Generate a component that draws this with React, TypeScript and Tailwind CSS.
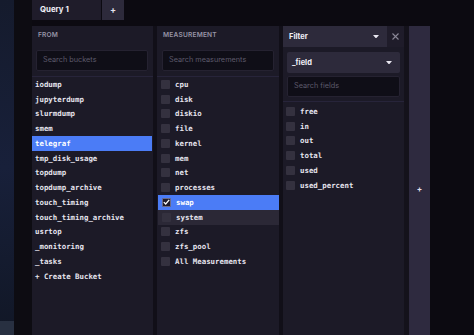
import { useState } from "react";

const buckets = [
  "iodump",
  "jupyterdump",
  "slurmdump",
  "smem",
  "telegraf",
  "tmp_disk_usage",
  "topdump",
  "topdump_archive",
  "touch_timing",
  "touch_timing_archive",
  "usrtop",
  "_monitoring",
  "_tasks",
  "+ Create Bucket",
];

const measurements = [
  "cpu",
  "disk",
  "diskio",
  "file",
  "kernel",
  "mem",
  "net",
  "processes",
  "swap",
  "system",
  "zfs",
  "zfs_pool",
  "All Measurements",
];

const fields = ["free", "in", "out", "total", "used", "used_percent"];

const mono = "font-['DejaVu_Sans_Mono',monospace]";
const sans = "font-['Inter',sans-serif]";

function Caret() {
  return (
    <svg width="6" height="3.5" viewBox="0 0 6 3.5" className="shrink-0">
      <path d="M0 0h6L3 3.5z" fill="#e8e6f0" />
    </svg>
  );
}

function Checkbox({ checked }: { checked?: boolean }) {
  if (checked) {
    return (
      <span className="w-[9px] h-[9px] rounded-[1px] bg-[#1f1c2c] border border-[#6b6a86] flex items-center justify-center shrink-0">
        <svg width="7" height="6" viewBox="0 0 7 6">
          <path
            d="M0.8 3.1 2.7 5 6.2 0.9"
            stroke="#fff"
            strokeWidth="1.3"
            fill="none"
          />
        </svg>
      </span>
    );
  }
  return <span className="w-[9px] h-[9px] rounded-[1px] bg-[#34313f] shrink-0" />;
}

function SearchBox({ placeholder }: { placeholder: string }) {
  return (
    <div
      className={`h-[21px] bg-[#0f0e17] border border-[#252231] rounded-[2px] flex items-center px-[6px] text-[7.3px] text-[#5d5a6b] ${sans}`}
    >
      {placeholder}
    </div>
  );
}

function PanelHeader({ title }: { title: string }) {
  return (
    <div
      className={`h-[20px] flex items-end pb-[5px] px-[6px] text-[6.6px] font-semibold tracking-[0.2px] text-[#9794a6] ${sans}`}
    >
      {title}
    </div>
  );
}

export default function App() {
  const [selectedBucket] = useState("telegraf");
  const [selectedMeasurement] = useState("swap");

  return (
    <div className="w-[474px] h-[335px] bg-[#0c0a11] flex overflow-hidden">
      <div className="w-[14px] h-full flex flex-col bg-gradient-to-b from-[#151b2d] via-[#18203a] to-[#111726]">
        <div className="flex-1" />
        <div className="h-[14px] bg-[#283041]" />
      </div>
      <div className="w-[18px] h-full bg-[#0d0c12]" />

      <div className="flex flex-col">
        {/* tabs */}
        <div className="h-[20px] flex gap-[1px]">
          <div
            className={`w-[69px] bg-[#1f1c2a] flex items-center px-[8px] text-[7.8px] font-bold text-[#f1eff8] ${sans}`}
          >
            Query 1
          </div>
          <div
            className={`w-[22px] bg-[#2d2a3b] flex items-center justify-center text-[9px] font-bold text-[#e4e2ee] ${sans}`}
          >
            +
          </div>
        </div>

        <div className="mt-[6px] flex flex-1">
          {/* FROM */}
          <div className="w-[121px] bg-[#1c1a27] flex flex-col">
            <PanelHeader title="FROM" />
            <div className="pl-[4px] pr-[5px] pt-[4px] pb-[5px] border-b border-[#27243a]">
              <SearchBox placeholder="Search buckets" />
            </div>
            <div className="flex flex-col">
              {buckets.map((b) => (
                <div
                  key={b}
                  className={`h-[14.75px] flex items-center px-[3px] text-[7.4px] font-bold ${mono} ${
                    b === selectedBucket
                      ? "bg-[#4b7cf6] text-white mr-[1px]"
                      : "text-[#e6e4ee]"
                  }`}
                >
                  {b}
                </div>
              ))}
            </div>
          </div>

          <div className="w-[4px] bg-[#110f18]" />

          {/* MEASUREMENT */}
          <div className="w-[122px] bg-[#1c1a27] flex flex-col">
            <PanelHeader title="MEASUREMENT" />
            <div className="px-[5px] pt-[4px] pb-[5px] border-b border-[#27243a]">
              <SearchBox placeholder="Search measurements" />
            </div>
            <div className="flex flex-col">
              {measurements.map((m) => (
                <div
                  key={m}
                  className={`h-[14.75px] flex items-center gap-[5px] pl-[4px] text-[7.4px] font-bold ${mono} ${
                    m === selectedMeasurement
                      ? "bg-[#4b7cf6] text-white ml-[1px] pl-[3px]"
                      : m === "system"
                        ? "bg-[#2b2836] text-[#e6e4ee] ml-[1px] pl-[3px]"
                        : "text-[#e6e4ee]"
                  }`}
                >
                  <Checkbox checked={m === selectedMeasurement} />
                  {m}
                </div>
              ))}
            </div>
          </div>

          <div className="w-[4px] bg-[#110f18]" />

          {/* Filter */}
          <div className="w-[121px] bg-[#1c1a27] flex flex-col">
            <div className="h-[21px] flex">
              <div
                className={`w-[104px] bg-[#2d2a3b] flex items-center justify-between pl-[6px] pr-[8px] text-[7.5px] font-bold text-[#f1eff8] ${sans}`}
              >
                Filter
                <Caret />
              </div>
              <div className="flex-1 bg-[#1f1c2a] flex items-center justify-center">
                <svg width="7" height="7" viewBox="0 0 7 7">
                  <path
                    d="M0.5 0.5 6.5 6.5M6.5 0.5 0.5 6.5"
                    stroke="#8a8797"
                    strokeWidth="1.1"
                  />
                </svg>
              </div>
            </div>
            <div className="px-[4px] pt-[5px] pb-[4px] flex flex-col gap-[3px] border-b border-[#27243a]">
              <div
                className={`h-[21px] bg-[#2d2a3b] rounded-[2px] flex items-center justify-between pl-[5px] pr-[8px] text-[7.5px] font-bold text-[#f1eff8] ${sans}`}
              >
                _field
                <Caret />
              </div>
              <SearchBox placeholder="Search fields" />
            </div>
            <div className="flex flex-col pt-[2px]">
              {fields.map((f) => (
                <div
                  key={f}
                  className={`h-[14.75px] flex items-center gap-[5px] pl-[3px] text-[7.4px] font-bold text-[#e6e4ee] ${mono}`}
                >
                  <Checkbox />
                  {f}
                </div>
              ))}
            </div>
          </div>

          <div className="w-[5px] bg-[#14121b]" />

          <div
            className={`w-[21px] bg-[#2e2a3f] flex justify-center pt-[157px] text-[8px] font-bold text-[#e4e2ee] ${sans}`}
          >
            +
          </div>
        </div>
      </div>
    </div>
  );
}
